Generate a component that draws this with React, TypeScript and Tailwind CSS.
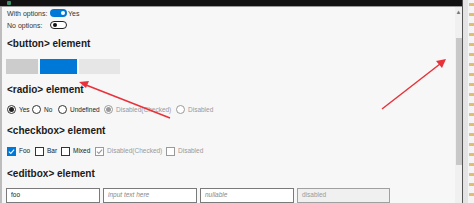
import React from "react";

const font = { fontFamily: '"Liberation Sans", Arial, sans-serif' };

function Heading({ children }: { children: React.ReactNode }) {
  return (
    <div className="h-[12px] flex items-center text-[10px] font-bold text-[#1a1a1a] leading-none">
      {children}
    </div>
  );
}

function Radio({ label, w, checked, disabled }: { label: string; w: string; checked?: boolean; disabled?: boolean }) {
  const ring = disabled ? "border-[#9a9a9a]" : "border-[#333]";
  return (
    <div className={`flex items-center gap-[3px] shrink-0 whitespace-nowrap ${w}`}>
      <span className={`w-[9px] h-[9px] rounded-full border bg-white flex items-center justify-center shrink-0 ${ring}`}>
        {checked && <span className={`w-[5px] h-[5px] rounded-full ${disabled ? "bg-[#9a9a9a]" : "bg-[#222]"}`} />}
      </span>
      <span className={disabled ? "text-[#9a9a9a]" : "text-[#222]"}>{label}</span>
    </div>
  );
}

function Check({ label, w, checked, disabled }: { label: string; w: string; checked?: boolean; disabled?: boolean }) {
  let box = "border-[#333] bg-white";
  if (checked && !disabled) box = "border-[#0078d7] bg-[#0078d7]";
  if (disabled) box = "border-[#9a9a9a] bg-white";
  return (
    <div className={`flex items-center gap-[3px] shrink-0 whitespace-nowrap ${w}`}>
      <span className={`w-[9px] h-[9px] border flex items-center justify-center shrink-0 ${box}`}>
        {checked && (
          <svg width="7" height="7" viewBox="0 0 8 8">
            <path d="M1 4.2 L3.2 6.2 L7 1.8" fill="none" stroke={disabled ? "#9a9a9a" : "#fff"} strokeWidth="1.2" />
          </svg>
        )}
      </span>
      <span className={disabled ? "text-[#9a9a9a]" : "text-[#222]"}>{label}</span>
    </div>
  );
}

export default function App() {
  return (
    <div className="relative w-[474px] h-[203px] overflow-hidden flex bg-white" style={font}>
      {/* window */}
      <div className="w-[462px] h-full flex flex-col">
        <div className="h-[6px] bg-[#121212] flex items-center pl-[7px]">
          <span className="w-[4px] h-[4px] bg-[#3b8f6a] rounded-[1px]" />
        </div>
        <div className="h-px bg-[#9a9a9a]" />
        <div className="flex-1 flex min-h-0">
          <div className="flex-1 bg-[#f7f7f7] border-l-2 border-[#bdbdbd] pl-[5px] pt-px text-[6.5px] leading-none text-[#222] flex flex-col">
            <div className="h-[11px] flex items-center text-[7px]">
              <span className="w-[43px] text-[#333]">With options:</span>
              <span className="w-[17px] h-[8px] rounded-full bg-[#0078d7] flex items-center justify-end pr-[2px]">
                <span className="w-[4px] h-[4px] rounded-full bg-white" />
              </span>
              <span className="ml-[1px] text-[#333]">Yes</span>
            </div>
            <div className="mt-[2px] h-[10px] flex items-center text-[7px]">
              <span className="w-[43px] text-[#333]">No options:</span>
              <span className="w-[17px] h-[8px] rounded-full border border-[#222] bg-white flex items-center pl-[2px]">
                <span className="w-[4px] h-[4px] rounded-full bg-[#111]" />
              </span>
            </div>

            <div className="mt-[8px]">
              <Heading>&lt;button&gt; element</Heading>
            </div>
            <div className="mt-[9px] h-[16px] flex gap-[2px] -ml-px">
              <div className="w-[32px] bg-[#cccccc]" />
              <div className="w-[37px] bg-[#0078d7]" />
              <div className="w-[41px] bg-[#e6e6e6]" />
            </div>

            <div className="mt-[10px]">
              <Heading>&lt;radio&gt; element</Heading>
            </div>
            <div className="mt-[8px] h-[12px] flex items-center">
              <Radio w="w-[25px]" label="Yes" checked />
              <Radio w="w-[26px]" label="No" />
              <Radio w="w-[46px]" label="Undefined" />
              <Radio w="w-[72px]" label="Disabled(Checked)" checked disabled />
              <Radio w="w-[40px]" label="Disabled" disabled />
            </div>

            <div className="mt-[10px]">
              <Heading>&lt;checkbox&gt; element</Heading>
            </div>
            <div className="mt-[8px] h-[12px] flex items-center">
              <Check w="w-[28px]" label="Foo" checked />
              <Check w="w-[26px]" label="Bar" />
              <Check w="w-[34px]" label="Mixed" />
              <Check w="w-[71px]" label="Disabled(Checked)" checked disabled />
              <Check w="w-[40px]" label="Disabled" disabled />
            </div>

            <div className="mt-[11px]">
              <Heading>&lt;editbox&gt; element</Heading>
            </div>
            <div className="mt-[8px] h-[16px] flex gap-[3px] -ml-px">
              <div className="w-[94px] border border-[#7a7a7a] bg-white flex items-center pl-[4px] text-[#222]">foo</div>
              <div className="w-[94px] border border-[#7a7a7a] bg-white flex items-center pl-[4px] italic text-[#8a8a8a]">input text here</div>
              <div className="w-[94px] border border-[#7a7a7a] bg-white flex items-center pl-[4px] italic text-[#8a8a8a]">nullable</div>
              <div className="w-[93px] border border-[#a0a0a0] bg-[#f0f0f0] flex items-center pl-[4px] text-[#9a9a9a]">disabled</div>
            </div>
          </div>
          {/* scrollbar */}
          <div className="w-[7px] bg-[#f0f0f0] flex flex-col items-center">
            <span className="mt-[2px] text-[6px] leading-none text-[#777]">▲</span>
            <div className="mt-[23px] w-[6px] h-[127px] bg-[#c8c8c8]" />
          </div>
        </div>
      </div>
      <div className="w-px bg-[#555]" />
      <div className="w-[5px] bg-[#e4e4e4]" />
      <div className="flex-1 bg-[#f4f4f4] flex flex-col pt-[3px] gap-[7px] pl-px">
        {Array.from({ length: 20 }).map((_, i) => (
          <div key={i} className="w-[5px] h-[3px] bg-[#e0c070]" />
        ))}
      </div>

      <svg className="absolute inset-0 pointer-events-none" width="474" height="203">
        <line x1="170" y1="118" x2="86" y2="85" stroke="#e8323a" strokeWidth="1.5" />
        <polygon points="79,82 89,81 86,88" fill="#e8323a" />
        <line x1="382" y1="109" x2="440" y2="64" stroke="#e8323a" strokeWidth="1.5" />
        <polygon points="446,59 436,61 442,68" fill="#e8323a" />
      </svg>
    </div>
  );
}
